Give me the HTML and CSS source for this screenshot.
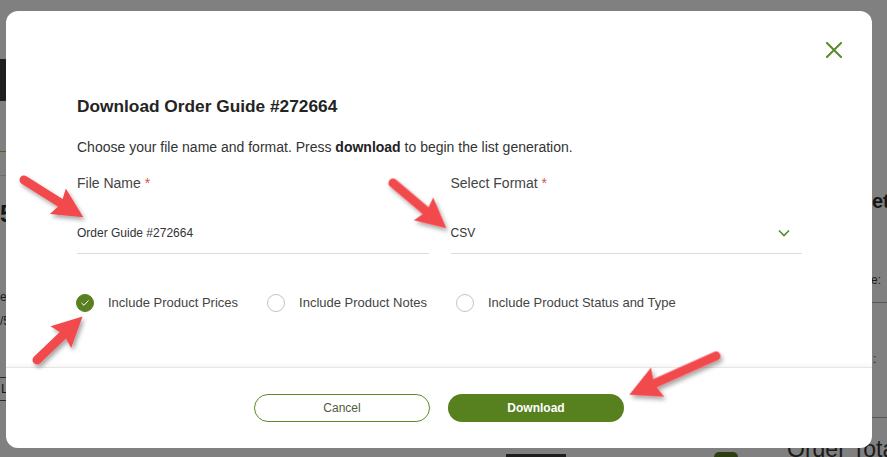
FILE: index.html
```html
<!DOCTYPE html>
<html lang="en">
<head>
<meta charset="utf-8">
<title>Download Order Guide</title>
<link rel="stylesheet" href="styles.css">
</head>
<body>
<div class="backdrop">
  <div class="bg-bar"></div>
  <div class="bg-line bg-line-green"></div>
  <div class="bg-line bg-line-gray"></div>
  <div class="bg-big">5,</div>
  <div class="bg-small bg-e">e</div>
  <div class="bg-small bg-s">/5</div>
  <div class="bg-box">Li</div>
  <div class="bg-head">eta</div>
  <div class="bg-small bg-colon1">e:</div>
  <div class="bg-rline bg-rline1"></div>
  <div class="bg-small bg-colon2">:</div>
  <div class="bg-rline bg-rline2"></div>
  <div class="bg-total">Order Tota</div>
  <div class="bg-dark"></div>
  <div class="bg-dot"></div>
</div>

<div class="modal" role="dialog">
  <button class="close" aria-label="Close">
    <svg width="16" height="16" viewBox="0 0 16 16"><path d="M1 1 L15 15 M15 1 L1 15" stroke="#5a8a2a" stroke-width="2" fill="none" stroke-linecap="square"/></svg>
  </button>
  <div class="modal-body">
    <h2 class="title">Download Order Guide #272664</h2>
    <p class="intro">Choose your file name and format. Press <b>download</b> to begin the list generation.</p>
    <div class="fields">
      <div class="field">
        <label class="label">File Name <span class="req">*</span></label>
        <div class="control">Order Guide #272664</div>
      </div>
      <div class="field">
        <label class="label">Select Format <span class="req">*</span></label>
        <div class="control select"><span class="select-value">CSV</span>
          <svg class="chevron" width="12" height="8" viewBox="0 0 12 8"><path d="M1 1.5 L6 6.5 L11 1.5" stroke="#5a8a2a" stroke-width="1.6" fill="none"/></svg>
        </div>
      </div>
    </div>
    <div class="options">
      <label class="option"><span class="check checked"><svg width="10" height="8" viewBox="0 0 10 8"><path d="M1.5 4 L4 6.3 L8.5 1.5" stroke="#fff" stroke-width="1" fill="none"/></svg></span>Include Product Prices</label>
      <label class="option"><span class="check"></span>Include Product Notes</label>
      <label class="option"><span class="check"></span>Include Product Status and Type</label>
    </div>
  </div>
  <div class="modal-footer">
    <button class="btn btn-outline">Cancel</button>
    <button class="btn btn-primary">Download</button>
  </div>
</div>

<svg class="annotations" width="887" height="457" viewBox="0 0 887 457">
  <defs>
    <filter id="shadow" x="-50%" y="-50%" width="200%" height="200%">
      <feDropShadow dx="2" dy="3" stdDeviation="2" flood-color="#000" flood-opacity="0.35"/>
    </filter>
  </defs>
  <g fill="#f2484d" stroke="#f2484d" filter="url(#shadow)">
    <g transform="translate(24 180) rotate(32.1)">
      <line x1="0" y1="0" x2="46" y2="0" stroke-width="9" stroke-linecap="round"/>
      <polygon points="70,0 40,-15 44,0 40,15" stroke="none"/>
    </g>
    <g transform="translate(37 360) rotate(-43.7)">
      <line x1="0" y1="0" x2="38" y2="0" stroke-width="9" stroke-linecap="round"/>
      <polygon points="63,0 33,-15 37,0 33,15" stroke="none"/>
    </g>
    <g transform="translate(393 183) rotate(40.3)">
      <line x1="0" y1="0" x2="46" y2="0" stroke-width="9" stroke-linecap="round"/>
      <polygon points="70,0 40,-15 44,0 40,15" stroke="none"/>
    </g>
    <g transform="translate(716 356) rotate(155.9)">
      <line x1="0" y1="0" x2="70" y2="0" stroke-width="9" stroke-linecap="round"/>
      <polygon points="95,0 64,-16 68,0 64,16" stroke="none"/>
    </g>
  </g>
</svg>
</body>
</html>
```

FILE: styles.css
```css
html, body {
  margin: 0;
  padding: 0;
}
body {
  width: 887px;
  height: 457px;
  overflow: hidden;
  position: relative;
  background: #808080;
  font-family: "Liberation Sans", Arial, sans-serif;
}

/* dimmed page behind the dialog */
.backdrop {
  position: absolute;
  inset: 0;
  overflow: hidden;
  color: #161616;
  white-space: nowrap;
}
.bg-bar { position: absolute; left: 0; top: 59px; width: 40px; height: 42px; background: #1f1f1f; }
.bg-line { position: absolute; left: 0; width: 40px; height: 1px; }
.bg-line-green { top: 151px; background: #4d5f2c; }
.bg-line-gray { top: 175px; background: #6c6c6c; }
.bg-big { position: absolute; left: 0; top: 200px; font-size: 24px; font-weight: 700; }
.bg-small { position: absolute; font-size: 12px; color: #1c1c1c; }
.bg-e { left: 0; top: 290px; }
.bg-s { left: 0; top: 314px; }
.bg-box { position: absolute; left: 0; top: 377px; width: 30px; height: 24px; border: 1px solid #2a2a2a; border-left: 0; box-sizing: border-box; font-size: 13px; line-height: 22px; padding-left: 1px; }
.bg-head { position: absolute; left: 872px; top: 190px; font-size: 20px; font-weight: 700; }
.bg-colon1 { left: 871px; top: 273px; }
.bg-colon2 { left: 873px; top: 352px; }
.bg-rline { position: absolute; left: 860px; width: 40px; height: 1px; background: #555; }
.bg-rline1 { top: 302px; }
.bg-rline2 { top: 417px; }
.bg-total { position: absolute; left: 787px; top: 436px; font-size: 23px; color: #1a1a1a; }
.bg-dark { position: absolute; left: 506px; top: 454px; width: 60px; height: 3px; background: #1e1e1e; }
.bg-dot { position: absolute; left: 714px; top: 452px; width: 24px; height: 5px; border-radius: 12px 12px 0 0; background: #2c3f12; }

/* dialog */
.modal {
  position: absolute;
  left: 6px;
  top: 11px;
  width: 866px;
  height: 437px;
  background: #fff;
  border-radius: 12px;
  display: flex;
  flex-direction: column;
  overflow: hidden;
}
.close {
  position: absolute;
  top: 31px;
  right: 30px;
  width: 16px;
  height: 16px;
  padding: 0;
  border: 0;
  background: none;
  display: block;
}
.close svg { display: block; }

.modal-body {
  flex: 1;
  padding: 85px 70px 0 71px;
}
.title {
  margin: 0;
  font-size: 17.3px;
  line-height: 20px;
  font-weight: 700;
  color: #242424;
}
.intro {
  margin: 22px 0 0;
  font-size: 14px;
  line-height: 18px;
  color: #333;
}
.intro b { color: #222; }

.fields {
  margin-top: 18px;
  display: grid;
  grid-template-columns: 1fr 1fr;
  column-gap: 22px;
}
.label {
  display: block;
  font-size: 14px;
  line-height: 18px;
  color: #444;
}
.req { color: #d9553e; }
.control {
  padding: 33px 0 12px;
  font-size: 12px;
  line-height: 16px;
  color: #333;
  border-bottom: 1px solid #dcdcdc;
}
.select {
  display: flex;
  justify-content: space-between;
  align-items: center;
}
.chevron { display: block; margin-right: 12px; }

.options {
  margin-top: 40px;
  display: flex;
  gap: 29px;
}
.option {
  display: flex;
  align-items: center;
  gap: 14px;
  font-size: 13px;
  line-height: 18px;
  color: #444;
}
.option:first-child { margin-left: -1px; }
.check {
  width: 18px;
  height: 18px;
  box-sizing: border-box;
  border-radius: 50%;
  border: 1px solid #c4c4c4;
  background: #fff;
  display: flex;
  align-items: center;
  justify-content: center;
}
.check.checked {
  background: #5a7f22;
  border-color: #5a7f22;
}
.check svg { display: block; }

.modal-footer {
  flex: 0 0 81px;
  box-sizing: border-box;
  border-top: 1px solid #e6e6e6;
  box-shadow: 0 -2px 4px rgba(0, 0, 0, 0.04);
  display: flex;
  justify-content: center;
  align-items: center;
  gap: 18px;
}
.btn {
  width: 176px;
  height: 28px;
  border-radius: 14px;
  font-family: "Liberation Sans", Arial, sans-serif;
  font-size: 12px;
  padding: 0;
  box-sizing: border-box;
}
.btn-outline {
  background: #fff;
  border: 1px solid #5d8a2a;
  color: #4f5d3a;
}
.btn-primary {
  background: #57801f;
  border: 0;
  color: #fff;
  font-weight: 700;
}

.annotations {
  position: absolute;
  left: 0;
  top: 0;
  pointer-events: none;
}
```
